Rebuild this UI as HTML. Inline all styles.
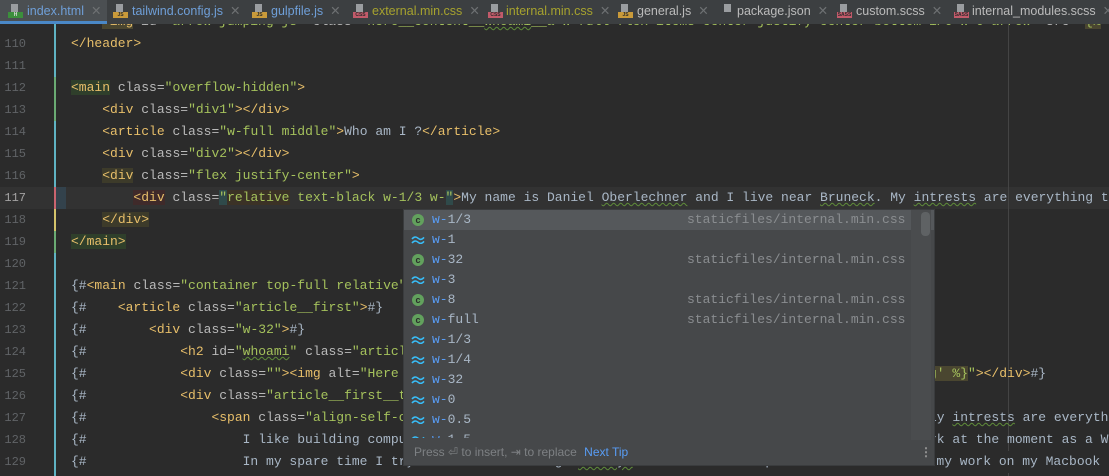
<!DOCTYPE html>
<html><head><meta charset="utf-8"><style>
*{margin:0;padding:0;box-sizing:border-box}
body{width:1109px;height:476px;overflow:hidden;background:#2b2b2b;position:relative;font-family:"Liberation Mono",monospace;font-size:13px}
#tabs{position:absolute;left:0;top:0;width:1109px;height:24px;background:#3c3f41;font-family:"Liberation Sans",sans-serif;font-size:12.5px;color:#bbbbbb;z-index:5}
.tab{position:absolute;top:0;height:24px;line-height:22px;white-space:nowrap}
.ic{position:absolute;top:4px;width:15px;height:14px}
.ic .pg{position:absolute;left:3px;top:0;width:7px;height:8px;background:#9a9da0}
.ic .lb{position:absolute;left:0;bottom:0;width:15px;height:6px;font-size:5px;line-height:6px;color:#2b2b2b;font-weight:bold;text-align:center}
.tt{position:absolute;top:0}
.x{color:#6e7173;margin-left:7px}
.ln{position:absolute;left:0;width:26px;text-align:right;color:#606366;height:22px;line-height:22px;font-size:12px}
.cl{position:absolute;left:71px;height:22px;line-height:22px;white-space:pre;color:#a9b7c6}
.t{color:#e8bf6a}.a{color:#bababa}.s{color:#a5c25c}
.u{text-decoration:underline wavy #5f8c3a;text-decoration-thickness:1px}
#pop{position:absolute;left:403px;top:209px;width:532px;height:257px;background:#46484a;z-index:4;overflow:hidden;border:1px solid #3a3c3e}
.r{height:20px;line-height:20px;position:relative;white-space:pre}
.r .n{position:absolute;left:28px;color:#a9b7c6}.r .n b{color:#589df6;font-weight:normal}
.r .f{position:absolute;left:283px;color:#8a8d90}
.cI{position:absolute;left:8px;top:4px;width:12px;height:12px;border-radius:50%;background:#62a15d;color:#2b2b2b;font-size:9px;line-height:12px;text-align:center;font-family:"Liberation Sans",sans-serif;font-weight:bold}
.tw{position:absolute;left:7px;top:6px;line-height:0}
</style></head><body>
<div id="tabs">
<div class="tab" style="left:0;width:107px;background:#4b4f52;border-bottom:3px solid #4a88c7;height:24px"><div class="ic" style="left:8px"><div class="pg"></div><div class="lb" style="background:#3c8f3c;color:#ddd">H</div></div><span class="tt" style="left:27px;color:#6f9fd8">index.html<span class="x">✕</span></span></div>
<div class="tab" style="left:113px"><div class="ic" style="left:0"><div class="pg"></div><div class="lb" style="background:#c99a3a">JS</div></div><span class="tt" style="left:19px;color:#6f9fd8">tailwind.config.js<span class="x">✕</span></span></div>
<div class="tab" style="left:252px"><div class="ic" style="left:0"><div class="pg"></div><div class="lb" style="background:#c99a3a">JS</div></div><span class="tt" style="left:19px;color:#6f9fd8">gulpfile.js<span class="x">✕</span></span></div>
<div class="tab" style="left:353px"><div class="ic" style="left:0"><div class="pg"></div><div class="lb" style="background:#c25a6a">CSS</div></div><span class="tt" style="left:19px;color:#a6a22e">external.min.css<span class="x">✕</span></span></div>
<div class="tab" style="left:488px"><div class="ic" style="left:0"><div class="pg"></div><div class="lb" style="background:#c25a6a">CSS</div></div><span class="tt" style="left:18px;color:#a6a22e">internal.min.css<span class="x">✕</span></span></div>
<div class="tab" style="left:618px"><div class="ic" style="left:0"><div class="pg"></div><div class="lb" style="background:#c99a3a">JS</div></div><span class="tt" style="left:19px">general.js<span class="x">✕</span></span></div>
<div class="tab" style="left:721px"><div class="ic" style="left:0"><div class="pg"></div></div><span class="tt" style="left:16px">package.json<span class="x">✕</span></span></div>
<div class="tab" style="left:837px"><div class="ic" style="left:0"><div class="pg"></div><div class="lb" style="background:#c25a6a">SASS</div></div><span class="tt" style="left:19px">custom.scss<span class="x">✕</span></span></div>
<div class="tab" style="left:954px"><div class="ic" style="left:0"><div class="pg"></div><div class="lb" style="background:#c25a6a">SASS</div></div><span class="tt" style="left:18px">internal_modules.scss<span class="x">✕</span></span></div>
</div>
<div style="position:absolute;left:0;top:187px;width:1109px;height:22px;background:#323232"></div>
<div style="position:absolute;left:56px;top:187px;width:10px;height:22px;background:#33424c"></div>
<div style="position:absolute;left:54px;top:24px;width:2px;height:452px;background:#5fb3c3"></div>
<div style="position:absolute;left:54px;top:77px;width:2px;height:44px;background:#6aab73"></div>
<div style="position:absolute;left:54px;top:187px;width:2px;height:22px;background:#c9646f"></div>
<div style="position:absolute;left:54px;top:209px;width:2px;height:22px;background:#d4c36a"></div>
<div style="position:absolute;left:54px;top:231px;width:2px;height:22px;background:#6aab73"></div>
<div style="position:absolute;left:1008px;top:24px;width:1px;height:452px;background:#444"></div>
<div class="cl" style="top:11px;left:102px"><span class="t" style="background:#4a4630">&lt;img</span> <span class="a">id=</span><span class="s">"arrow-jumping-js"</span> <span class="a">class=</span><span class="s">"hero__content__<span class="u">whoami</span>__a w-full flex items-center justify-center bottom-1/6 w-6 arrow"</span> <span class="a">src=</span><span class="s">"</span><span style="background:#4a4630" class="s">{%</span></div>
<div class="ln" style="top:33px">110</div><div class="cl" style="top:33px"><span class="t">&lt;/header&gt;</span></div>
<div class="ln" style="top:55px">111</div>
<div class="ln" style="top:77px">112</div><div class="cl" style="top:77px"><span class="t" style="background:#2f3f2b">&lt;main</span> <span class="a">class=</span><span class="s">"overflow-hidden"</span><span class="t">&gt;</span></div>
<div class="ln" style="top:99px">113</div><div class="cl" style="top:99px">    <span class="t">&lt;div</span> <span class="a">class=</span><span class="s">"div1"</span><span class="t">&gt;&lt;/div&gt;</span></div>
<div class="ln" style="top:121px">114</div><div class="cl" style="top:121px">    <span class="t">&lt;article</span> <span class="a">class=</span><span class="s">"w-full middle"</span><span class="t">&gt;</span>Who am I ?<span class="t">&lt;/article&gt;</span></div>
<div class="ln" style="top:143px">115</div><div class="cl" style="top:143px">    <span class="t">&lt;div</span> <span class="a">class=</span><span class="s">"div2"</span><span class="t">&gt;&lt;/div&gt;</span></div>
<div class="ln" style="top:165px">116</div><div class="cl" style="top:165px">    <span class="t" style="background:#3d3b2a">&lt;div</span> <span class="a">class=</span><span class="s">"flex justify-center"</span><span class="t">&gt;</span></div>
<div class="ln" style="top:187px;color:#a4a3a3">117</div><div class="cl" style="top:187px">        <span class="t" style="background:#3f2a2a">&lt;div</span> <span class="a">class=</span><span class="s" style="background:#2f4a4a">"</span><span class="s" style="background:#3b3226">relative</span><span class="s"> text-black w-1/3 w-</span><span class="s" style="background:#2f4a4a">"</span><span class="t">&gt;</span>My name is Daniel <span class="u">Oberlechner</span> and I live near <span class="u">Bruneck</span>. My <span class="u">intrests</span> are everything t</div>
<div class="ln" style="top:209px">118</div><div class="cl" style="top:209px">    <span class="t" style="background:#3d3b2a">&lt;/div&gt;</span></div>
<div class="ln" style="top:231px">119</div><div class="cl" style="top:231px"><span class="t" style="background:#2f3f2b">&lt;/main&gt;</span></div>
<div class="ln" style="top:253px">120</div>
<div class="ln" style="top:275px">121</div><div class="cl" style="top:275px">{#<span class="t">&lt;main</span> <span class="a">class=</span><span class="s">"container top-full relative"</span></div>
<div class="ln" style="top:297px">122</div><div class="cl" style="top:297px">{#    <span class="t">&lt;article</span> <span class="a">class=</span><span class="s">"article__first"</span><span class="t">&gt;</span>#}</div>
<div class="ln" style="top:319px">123</div><div class="cl" style="top:319px">{#        <span class="t">&lt;div</span> <span class="a">class=</span><span class="s">"w-32"</span><span class="t">&gt;</span>#}</div>
<div class="ln" style="top:341px">124</div><div class="cl" style="top:341px">{#            <span class="t">&lt;h2</span> <span class="a">id=</span><span class="s">"<span class="u">whoami</span>"</span> <span class="a">class=</span><span class="s">"article</span></div>
<div class="ln" style="top:363px">125</div><div class="cl" style="top:363px">{#            <span class="t">&lt;div</span> <span class="a">class=</span><span class="s">""</span><span class="t">&gt;&lt;img</span> <span class="a">alt=</span><span class="s">"Here is</span></div>
<div class="cl" style="top:363px;left:929px"><span class="s" style="background:#4a4630">g' %}</span><span class="s">"</span><span class="t">&gt;&lt;/div&gt;</span>#}</div>
<div class="ln" style="top:385px">126</div><div class="cl" style="top:385px">{#            <span class="t">&lt;div</span> <span class="a">class=</span><span class="s">"article__first__t</span></div>
<div class="ln" style="top:407px">127</div><div class="cl" style="top:407px">{#                <span class="t">&lt;span</span> <span class="a">class=</span><span class="s">"align-self-c</span></div>
<div class="cl" style="top:407px;left:929px">ly <span class="u">intrests</span> are everything</div>
<div class="ln" style="top:429px">128</div><div class="cl" style="top:429px">{#                    I like building compu</div>
<div class="cl" style="top:429px;left:929px">rk at the moment as a Web</div>
<div class="ln" style="top:451px">129</div><div class="cl" style="top:451px">{#                    In my spare time I try to learn new things <span class="u">allways</span> in focus the computer. I do most of my work on my Macbook Pr</div>
<div class="cl" style="top:451px;left:913px;background:#2b2b2b">of my work on my Macbook Pro</div>
<div id="pop">
<div class="r" style="background:#55585b"><span class="cI">c</span><span class="n"><b>w-</b>1/3</span><span class="f">staticfiles/internal.min.css</span></div>
<div class="r"><span class="tw"><svg width="14" height="8" viewBox="0 0 14 8"><path d="M1 3c2-2.5 4-2.5 6-.8s4 1.7 6-.8M1 7c2-2.5 4-2.5 6-.8s4 1.7 6-.8" stroke="#38bdf8" stroke-width="1.6" fill="none"/></svg></span><span class="n"><b>w-</b>1</span></div>
<div class="r"><span class="cI">c</span><span class="n"><b>w-</b>32</span><span class="f">staticfiles/internal.min.css</span></div>
<div class="r"><span class="tw"><svg width="14" height="8" viewBox="0 0 14 8"><path d="M1 3c2-2.5 4-2.5 6-.8s4 1.7 6-.8M1 7c2-2.5 4-2.5 6-.8s4 1.7 6-.8" stroke="#38bdf8" stroke-width="1.6" fill="none"/></svg></span><span class="n"><b>w-</b>3</span></div>
<div class="r"><span class="cI">c</span><span class="n"><b>w-</b>8</span><span class="f">staticfiles/internal.min.css</span></div>
<div class="r"><span class="cI">c</span><span class="n"><b>w-</b>full</span><span class="f">staticfiles/internal.min.css</span></div>
<div class="r"><span class="tw"><svg width="14" height="8" viewBox="0 0 14 8"><path d="M1 3c2-2.5 4-2.5 6-.8s4 1.7 6-.8M1 7c2-2.5 4-2.5 6-.8s4 1.7 6-.8" stroke="#38bdf8" stroke-width="1.6" fill="none"/></svg></span><span class="n"><b>w-</b>1/3</span></div>
<div class="r"><span class="tw"><svg width="14" height="8" viewBox="0 0 14 8"><path d="M1 3c2-2.5 4-2.5 6-.8s4 1.7 6-.8M1 7c2-2.5 4-2.5 6-.8s4 1.7 6-.8" stroke="#38bdf8" stroke-width="1.6" fill="none"/></svg></span><span class="n"><b>w-</b>1/4</span></div>
<div class="r"><span class="tw"><svg width="14" height="8" viewBox="0 0 14 8"><path d="M1 3c2-2.5 4-2.5 6-.8s4 1.7 6-.8M1 7c2-2.5 4-2.5 6-.8s4 1.7 6-.8" stroke="#38bdf8" stroke-width="1.6" fill="none"/></svg></span><span class="n"><b>w-</b>32</span></div>
<div class="r"><span class="tw"><svg width="14" height="8" viewBox="0 0 14 8"><path d="M1 3c2-2.5 4-2.5 6-.8s4 1.7 6-.8M1 7c2-2.5 4-2.5 6-.8s4 1.7 6-.8" stroke="#38bdf8" stroke-width="1.6" fill="none"/></svg></span><span class="n"><b>w-</b>0</span></div>
<div class="r"><span class="tw"><svg width="14" height="8" viewBox="0 0 14 8"><path d="M1 3c2-2.5 4-2.5 6-.8s4 1.7 6-.8M1 7c2-2.5 4-2.5 6-.8s4 1.7 6-.8" stroke="#38bdf8" stroke-width="1.6" fill="none"/></svg></span><span class="n"><b>w-</b>0.5</span></div>
<div class="r" style="height:8px;overflow:hidden"><span class="tw"><svg width="14" height="8" viewBox="0 0 14 8"><path d="M1 3c2-2.5 4-2.5 6-.8s4 1.7 6-.8M1 7c2-2.5 4-2.5 6-.8s4 1.7 6-.8" stroke="#38bdf8" stroke-width="1.6" fill="none"/></svg></span><span class="n"><b>w-</b>1.5</span></div>
<div style="position:absolute;left:0;top:230px;width:532px;height:27px;background:#46484a;font-family:'Liberation Sans',sans-serif;font-size:12px;line-height:24px;color:#7d8083;padding-left:10px">Press ⏎ to insert, ⇥ to replace <span style="color:#589df6;margin-left:4px">Next Tip</span><span style="position:absolute;left:516px;top:0;color:#999;font-weight:bold">⋮</span></div>
<div style="position:absolute;left:507px;top:0;width:20px;height:230px;background:#4a4c4e"></div>
<div style="position:absolute;left:517px;top:2px;width:9px;height:24px;border-radius:4px;background:#5f6264"></div>
</div>
</body></html>
